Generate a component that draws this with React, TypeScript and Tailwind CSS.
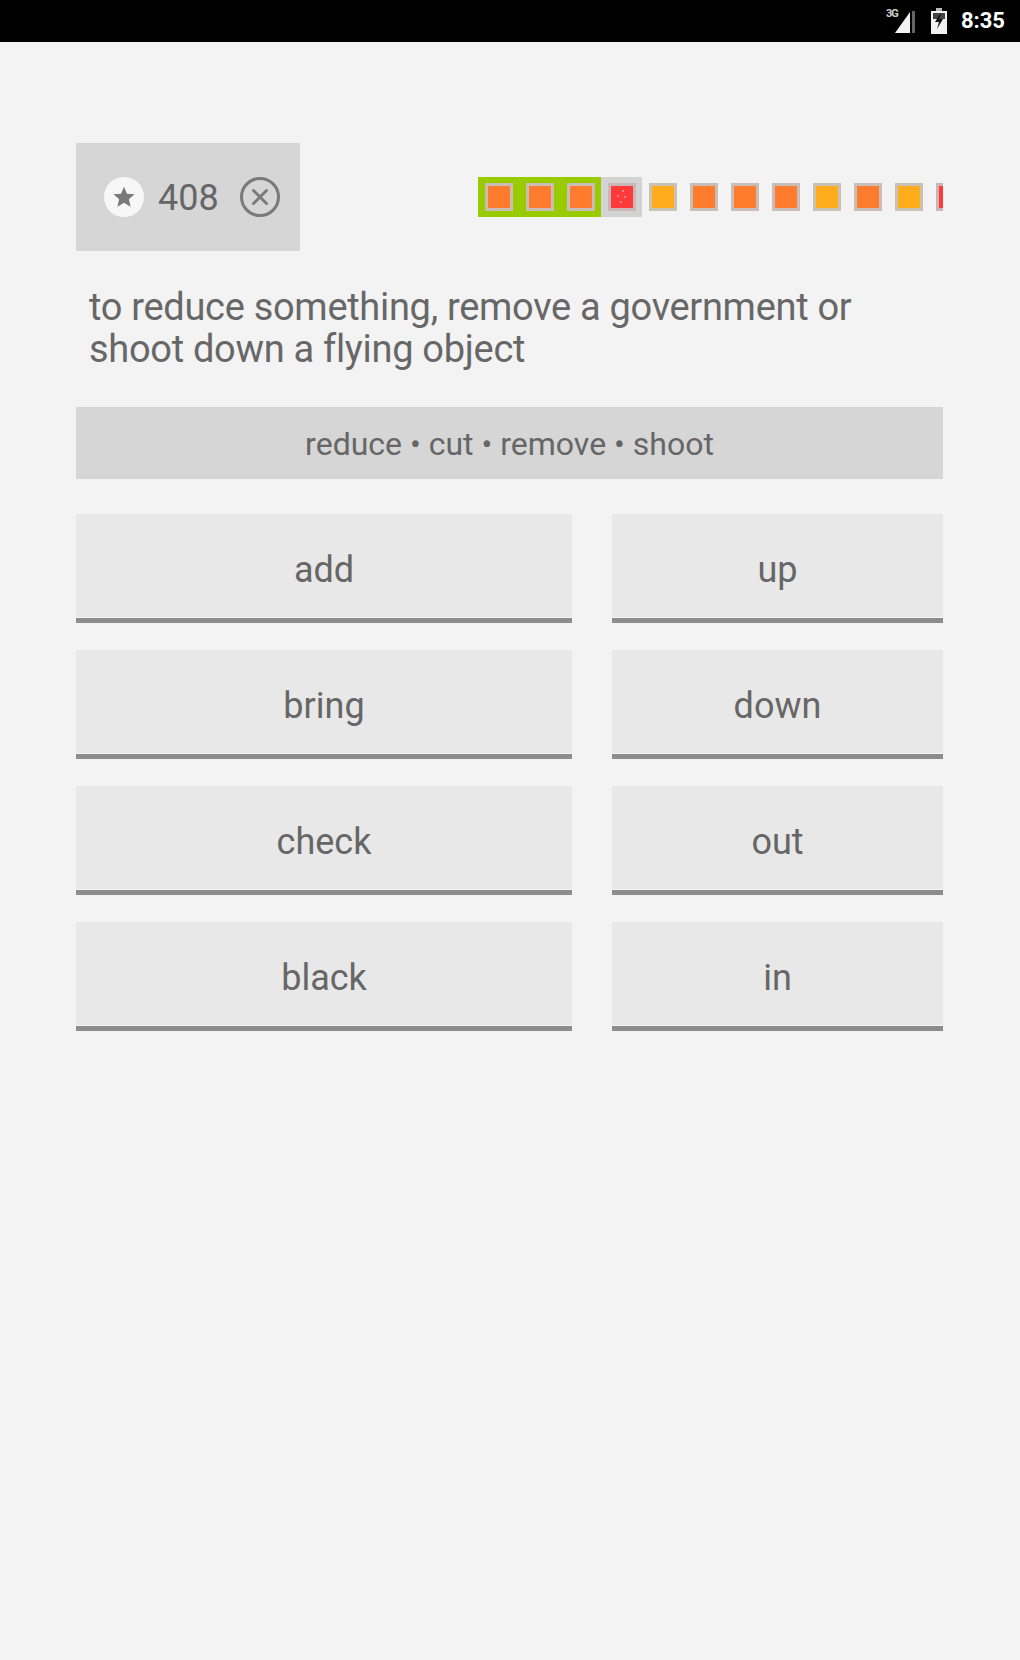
import React from 'react';

type Tile = 'orange' | 'yellow' | 'red';

const tileColor: Record<Tile, string> = {
  orange: 'bg-[#ff7b2e]',
  yellow: 'bg-[#ffad1c]',
  red: 'bg-[#ff3a3a]',
};

const done: Tile[] = ['orange', 'orange', 'orange'];
const upcoming: Tile[] = ['yellow', 'orange', 'orange', 'orange', 'yellow', 'orange', 'yellow', 'red'];

const answers: [string, string][] = [
  ['add', 'up'],
  ['bring', 'down'],
  ['check', 'out'],
  ['black', 'in'],
];

const Square: React.FC<{ tile: Tile; dots?: boolean }> = ({ tile, dots = false }) => (
  <div className="w-[41px] h-[40px] flex items-center justify-center shrink-0">
    <div className={`relative w-[28px] h-[28px] border-[3px] border-[#c4c4c4]/90 ${tileColor[tile]}`}>
      {dots && (
        <>
          <span className="absolute left-[11px] top-[4px] w-[2px] h-[2px] rounded-full bg-[#ff9a9a]" />
          <span className="absolute left-[6px] top-[9px] w-[2px] h-[2px] rounded-full bg-[#ff9a9a]" />
          <span className="absolute left-[13px] top-[10px] w-[2px] h-[2px] rounded-full bg-[#ff9a9a]" />
          <span className="absolute left-[9px] top-[15px] w-[2px] h-[2px] rounded-full bg-[#ff9a9a]" />
        </>
      )}
    </div>
  </div>
);

const StatusBar: React.FC = () => (
  <div className="h-[42px] bg-black flex items-center justify-end pr-[15px]">
    {/* signal */}
    <div className="relative w-[30px] h-[42px]">
      <span className="absolute left-[0px] top-[8px] text-[11px] leading-none font-bold text-[#d0d0d0] tracking-[-1px]">3G</span>
      <svg className="absolute left-[8px] top-[10px]" width="22" height="24" viewBox="0 0 22 24">
        <path d="M18 1 L18 23 L21 23 L21 1 Z" fill="#666" />
        <path d="M16 2 L16 23 L1 23 Z" fill="#f2f2f2" />
      </svg>
    </div>
    {/* battery */}
    <svg className="ml-[14px]" width="18" height="26" viewBox="0 0 18 26">
      <rect x="6" y="0" width="6" height="3" fill="#bbb" />
      <rect x="1" y="3" width="16" height="23" fill="#f2f2f2" />
      <rect x="3" y="5" width="12" height="6" fill="#444" />
      <path d="M10 6 L5 14 L9 14 L7 21 L13 11 L9 11 L11 6 Z" fill="#111" />
    </svg>
    <span className="ml-[13px] text-white text-[22px] font-bold leading-none">8:35</span>
  </div>
);

const AnswerButton: React.FC<{ label: string }> = ({ label }) => (
  <button className="h-[109px] bg-[#e8e8e8] border-b-[5px] border-[#8c8c8c] shadow-[inset_0_-1px_0_#f6f6f6] flex items-center justify-center text-[36px] text-[#666666] pt-[8px]">
    {label}
  </button>
);

export default function App() {
  return (
    <div className="w-[1020px] h-[1660px] bg-[#f3f3f3] font-['Roboto',sans-serif] overflow-hidden">
      <StatusBar />

      <div className="pl-[76px] pr-[77px] pt-[101px]">
        {/* Score + progress */}
        <div className="flex items-center">
          <div className="w-[224px] h-[108px] bg-[#d6d6d6] flex items-center pl-[28px] shrink-0">
            <div className="w-[40px] h-[40px] rounded-full bg-[#f7f7f7] flex items-center justify-center">
              <svg width="26" height="26" viewBox="0 0 24 24">
                <path d="M12 2.5l2.8 6.4 6.9.6-5.2 4.6 1.6 6.8L12 17.3l-6.1 3.6 1.6-6.8-5.2-4.6 6.9-.6z" fill="#7a7a7a" />
              </svg>
            </div>
            <span className="ml-[14px] text-[36px] leading-none text-[#666666] pt-[2px]">408</span>
            <svg className="ml-[20px]" width="42" height="42" viewBox="0 0 42 42">
              <circle cx="21" cy="21" r="18.5" fill="none" stroke="#7a7a7a" strokeWidth="3" />
              <path d="M14.5 14.5 L27.5 27.5 M27.5 14.5 L14.5 27.5" stroke="#7a7a7a" strokeWidth="3" strokeLinecap="round" />
            </svg>
          </div>

          <div className="ml-[178px] flex-1 overflow-hidden flex">
            <div className="flex bg-[#99cc00] shrink-0">
              {done.map((t, i) => (
                <Square key={i} tile={t} />
              ))}
            </div>
            <div className="bg-[#d3d3d3] shrink-0">
              <Square tile="red" dots />
            </div>
            {upcoming.map((t, i) => (
              <Square key={i} tile={t} />
            ))}
          </div>
        </div>

        {/* Definition */}
        <p className="mt-[35px] pl-[13px] text-[38px] leading-[42px] text-[#676767] tracking-[-0.3px]">
          to reduce something, remove a government or
          <br />
          shoot down a flying object
        </p>

        {/* Hint */}
        <div className="mt-[37px] h-[72px] bg-[#d6d6d6] flex items-center justify-center text-[32px] text-[#666666] pt-[2px]">
          reduce • cut • remove • shoot
        </div>

        {/* Answers */}
        <div className="mt-[35px] grid grid-cols-[496px_331px] gap-x-[40px] gap-y-[27px]">
          {answers.map(([left, right]) => (
            <React.Fragment key={left}>
              <AnswerButton label={left} />
              <AnswerButton label={right} />
            </React.Fragment>
          ))}
        </div>
      </div>
    </div>
  );
}
